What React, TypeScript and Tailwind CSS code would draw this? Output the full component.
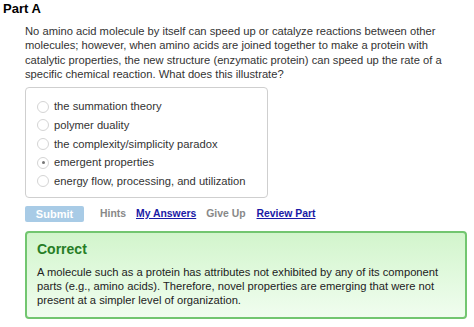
import React, { useState } from 'react';

const options = [
  'the summation theory',
  'polymer duality',
  'the complexity/simplicity paradox',
  'emergent properties',
  'energy flow, processing, and utilization',
];

export default function App() {
  const [selected, setSelected] = useState<number>(3);

  return (
    <div className="w-[474px] h-[327px] bg-white overflow-hidden text-[#222] font-['Liberation_Sans',Arial,sans-serif]">
      <h2 className="pl-[3px] pt-[1px] text-[13px] font-bold leading-[15px] text-black">Part A</h2>

      <div className="pl-[25px] pr-[20px] pt-[8px]">
        <p className="text-[11.2px] leading-[14.3px] text-[#333]">
          No amino acid molecule by itself can speed up or catalyze reactions between other
          molecules; however, when amino acids are joined together to make a protein with
          catalytic properties, the new structure (enzymatic protein) can speed up the rate of a
          specific chemical reaction. What does this illustrate?
        </p>

        {/* Answer choices */}
        <div className="mt-[6px] w-[243px] border border-[#cfcfcf] rounded-[4px] pt-[9px] pb-[6px] pl-[11px]">
          {options.map((opt, i) => (
            <label
              key={opt}
              className="flex items-center h-[18.7px] text-[11.2px] text-[#333] cursor-pointer"
              onClick={() => setSelected(i)}
            >
              <span className="w-[12px] h-[12px] rounded-full border border-[#d4d4d4] bg-white flex items-center justify-center mr-[5px]">
                {selected === i && <span className="w-[3px] h-[3px] rounded-full bg-[#777]" />}
              </span>
              {opt}
            </label>
          ))}
        </div>

        {/* Actions */}
        <div className="mt-[8px] flex items-center text-[10.4px] font-bold">
          <button className="w-[59px] h-[16px] rounded-[2px] bg-[#a8cbe6] text-white text-[11px] font-bold leading-[16px]">
            Submit
          </button>
          <span className="ml-[16px] text-[#888]">Hints</span>
          <a className="ml-[10px] text-[#1a1aa6] underline">My Answers</a>
          <span className="ml-[10px] text-[#888]">Give Up</span>
          <a className="ml-[11px] text-[#1a1aa6] underline">Review Part</a>
        </div>

        {/* Feedback */}
        <div className="mt-[9px] w-[442px] rounded-[4px] border-2 border-[#72c670] bg-gradient-to-b from-[#d2f5cc] to-[#f0fdef] px-[10px] pt-[8px] pb-[9px]">
          <div className="text-[14px] font-bold text-[#267d26] leading-[16px]">Correct</div>
          <p className="mt-[8px] text-[11.2px] leading-[14.3px] text-[#222]">
            A molecule such as a protein has attributes not exhibited by any of its component
            parts (e.g., amino acids). Therefore, novel properties are emerging that were not
            present at a simpler level of organization.
          </p>
        </div>
      </div>
    </div>
  );
}
